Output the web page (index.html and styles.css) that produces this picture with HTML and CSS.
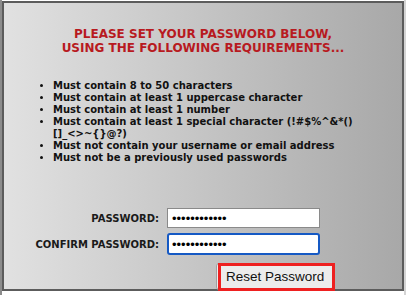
FILE: index.html
```html
<!DOCTYPE html>
<html lang="en">
<head>
  <meta charset="UTF-8">
  <meta name="viewport" content="width=device-width, initial-scale=1.0">
  <title>Reset Password</title>
  <link rel="stylesheet" href="styles.css">
</head>
<body>
  <div class="frame">
    <div class="panel">
      <h3 class="title">PLEASE SET YOUR PASSWORD BELOW,<br>USING THE FOLLOWING REQUIREMENTS...</h3>

      <!-- requirements -->
      <ul class="rules">
        <li>Must contain 8 to 50 characters</li>
        <li>Must contain at least 1 uppercase character</li>
        <li>Must contain at least 1 number</li>
        <li>Must contain at least 1 special character (!#$%^&amp;*()[]_&lt;&gt;~{}@?)</li>
        <li>Must not contain your username or email address</li>
        <li>Must not be a previously used passwords</li>
      </ul>

      <!-- form -->
      <div class="form-grid">
        <label for="pw">PASSWORD:</label>
        <input type="password" id="pw" value="aaaaaaaaaaaa">
        <label for="pw2">CONFIRM PASSWORD:</label>
        <input type="password" id="pw2" class="focused" value="aaaaaaaaaaaa">
        <span></span>
        <div class="btn-cell">
          <button class="reset-btn">Reset Password</button>
        </div>
      </div>
    </div>
  </div>

  <script>
    var f = document.getElementById('pw2');
    f.focus();
    f.setSelectionRange(f.value.length, f.value.length);
  </script>
</body>
</html>
```

FILE: styles.css
```css
body {
  margin: 0;
  background: #fff;
  font-family: "DejaVu Sans", Verdana, sans-serif;
}
.frame {
  border-left: 2px solid #8c8c8c;
  border-right: 2px solid #d4d4d4;
  padding-top: 1px;
  height: 294px;
}
.panel {
  box-sizing: border-box;
  height: 290px;
  border: 2px solid #5c5c5c;
  background: linear-gradient(to right, #e1e1e1, #a8a8a8);
  padding-top: 24px;
}
.title {
  margin: 0;
  text-align: center;
  color: #b81a1f;
  font-size: 12px;
  line-height: 14px;
  font-weight: bold;
}
.rules {
  margin: 25px 0 0 0;
  padding: 0 34px 0 49px;
  font-size: 10px;
  line-height: 12px;
  font-weight: bold;
  color: #111;
}
.form-grid {
  display: grid;
  grid-template-columns: 155px 155px;
  column-gap: 8px;
  row-gap: 5px;
  align-items: center;
  margin-top: 44px;
}
.form-grid label {
  text-align: right;
  font-size: 10px;
  font-weight: bold;
  color: #1a1a1a;
}
.form-grid input {
  box-sizing: border-box;
  height: 20px;
  width: 153px;
  border: 1px solid #8a8a8a;
  background: #fff;
  padding: 0 4px;
  font-size: 13px;
  font-family: "Liberation Sans", Arial, sans-serif;
}
.form-grid input.focused {
  height: 22px;
  border: 2px solid #1559c4;
  border-radius: 3px;
  padding: 0 3px;
  outline: none;
}
.btn-cell {
  padding-left: 49px;
  margin-top: 3px;
  white-space: nowrap;
}
.reset-btn {
  position: relative;
  height: 27px;
  padding: 0 8px 0 9px;
  font-family: "Liberation Sans", Arial, sans-serif;
  font-size: 13.5px;
  color: #111;
  background: #ececec;
  border: 1px solid #a0a0a0;
  border-radius: 3px;
}
.reset-btn::after {
  content: "";
  position: absolute;
  left: 1px;
  top: -1px;
  right: -3px;
  bottom: -2px;
  border: 3px solid #ee2020;
}
```
